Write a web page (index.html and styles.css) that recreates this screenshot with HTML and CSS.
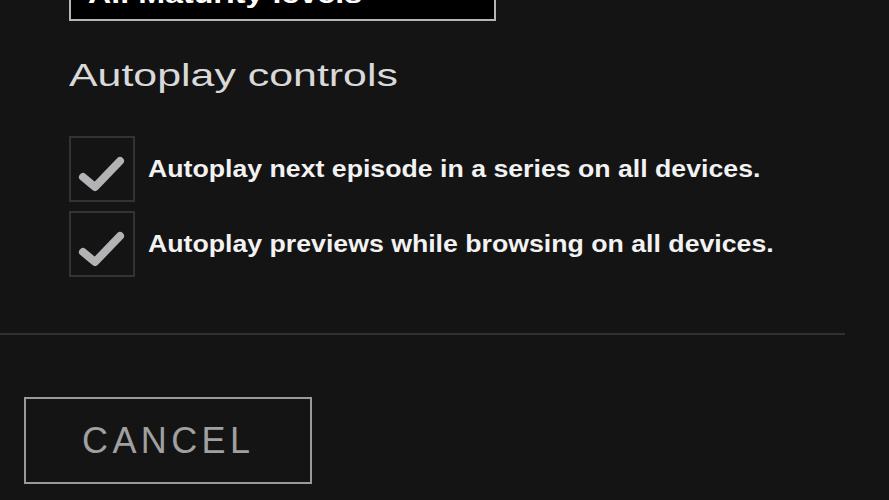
FILE: index.html
```html
<!DOCTYPE html>
<html lang="en">
<head>
<meta charset="utf-8">
<title>Playback settings</title>
<link rel="stylesheet" href="styles.css">
</head>
<body>
<main class="page">
  <section class="settings">
    <div class="select"><span class="select-text">All Maturity levels</span></div>
    <h2 class="heading"><span class="heading-text">Autoplay controls</span></h2>
    <ul class="options">
      <li class="option">
        <span class="box">
          <svg viewBox="0 0 66 66" width="66" height="66" aria-hidden="true">
            <path d="M14 41 L26 51 L51 25" fill="none" stroke="#b3b3b5" stroke-width="8" stroke-linecap="round" stroke-linejoin="round"/>
          </svg>
        </span>
        <span class="label">Autoplay next episode in a series on all devices.</span>
      </li>
      <li class="option">
        <span class="box">
          <svg viewBox="0 0 66 66" width="66" height="66" aria-hidden="true">
            <path d="M14 41 L26 51 L51 25" fill="none" stroke="#b3b3b5" stroke-width="8" stroke-linecap="round" stroke-linejoin="round"/>
          </svg>
        </span>
        <span class="label">Autoplay previews while browsing on all devices.</span>
      </li>
    </ul>
  </section>
  <hr class="divider">
  <div class="actions">
    <button class="cancel" type="button">CANCEL</button>
  </div>
</main>
</body>
</html>
```

FILE: styles.css
```css
html, body {
  margin: 0;
  padding: 0;
  background: #141414;
}

html {
  overflow: hidden;
}

body {
  font-family: "Liberation Sans", Arial, sans-serif;
  color: #fff;
}

.page {
  width: 889px;
  padding-top: 1px;
  margin-top: -1px;
}

.settings {
  padding-left: 69px;
}

.select {
  box-sizing: border-box;
  width: 427px;
  height: 60px;
  margin-top: -39px;
  border: 2px solid #b5b5b5;
  background: #000;
  color: #fff;
  font-weight: 700;
  font-size: 26px;
  line-height: 30px;
  padding: 16px 0 0 17px;
  white-space: nowrap;
}

.select-text {
  display: inline-block;
  transform: scaleX(1.24);
  transform-origin: left center;
}

.heading {
  margin: 36px 0 0;
  font-size: 32px;
  line-height: 37px;
  font-weight: 400;
  color: #d9d9d9;
  white-space: nowrap;
}

.heading-text {
  display: inline-block;
  transform: scaleX(1.34);
  transform-origin: left center;
}

.options {
  list-style: none;
  margin: 42px 0 0;
  padding: 0;
  display: flex;
  flex-direction: column;
  gap: 9px;
}

.option {
  display: flex;
  align-items: center;
  gap: 13px;
}

.box {
  box-sizing: border-box;
  flex: none;
  width: 66px;
  height: 66px;
  border: 2px solid #333;
  display: flex;
  align-items: center;
  justify-content: center;
}

.box svg {
  display: block;
  flex: none;
}

.label {
  display: inline-block;
  font-size: 23px;
  font-weight: 700;
  color: #f2f2f2;
  white-space: nowrap;
  transform: scaleX(1.16);
  transform-origin: left center;
}

.divider {
  width: 845px;
  height: 2px;
  margin: 56px 0 0;
  border: 0;
  background: #303030;
}

.actions {
  padding: 62px 0 0 24px;
}

.cancel {
  box-sizing: border-box;
  width: 288px;
  height: 87px;
  border: 2px solid #9a9a9a;
  background: transparent;
  color: #a0a0a0;
  font-family: "Liberation Sans", Arial, sans-serif;
  font-size: 36px;
  letter-spacing: 4.4px;
  padding: 0 0 0 6px;
  text-align: left;
  text-indent: 50px;
}
```
